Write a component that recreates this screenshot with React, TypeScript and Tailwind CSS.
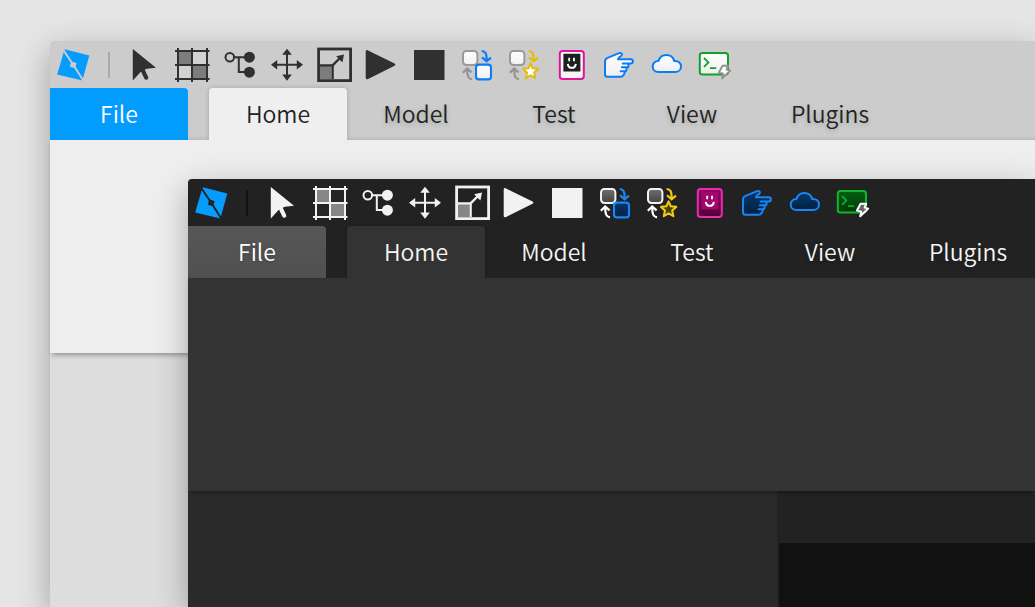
import type { ReactNode } from 'react';
import clsx from 'clsx';

interface Palette {
    id: string;
    bar: string;
    ink: string;
    cell: string;
    cellAlt: string;
    box: [string, string];
    boxStroke: string;
    back: string;
    blueFill: [string, string];
    blue: string;
    starFill: string;
    star: string;
    pinkFill: [string, string];
    pink: string;
    face: string;
    greenFill: [string, string];
    green: string;
    prompt: string;
    boltFill: string;
    bolt: string;
}

const light: Palette = {
    id: 'light',
    bar: '#cccccc',
    ink: '#303030',
    cell: '#7d7d7d',
    cellAlt: '#d2d2d2',
    box: ['#ffffff', '#f0f0f0'],
    boxStroke: '#999999',
    back: '#949494',
    blueFill: ['#ffffff', '#eeeeee'],
    blue: '#0a7cf5',
    starFill: '#ffffff',
    star: '#e2bd10',
    pinkFill: ['#ffffff', '#f2f2f2'],
    pink: '#e0149c',
    face: '#1f1f1f',
    greenFill: ['#ffffff', '#eeeeee'],
    green: '#0da32a',
    prompt: '#0da32a',
    boltFill: '#ffffff',
    bolt: '#919191',
};

const dark: Palette = {
    id: 'dark',
    bar: '#222222',
    ink: '#f2f2f2',
    cell: '#868686',
    cellAlt: '#252525',
    box: ['#707070', '#444444'],
    boxStroke: '#f2f2f2',
    back: '#ffffff',
    blueFill: ['#06376b', '#03203f'],
    blue: '#1687f5',
    starFill: '#4f4300',
    star: '#f0c818',
    pinkFill: ['#8f0563', '#4d0035'],
    pink: '#ee2aac',
    face: '#a3076f',
    greenFill: ['#035f10', '#023a09'],
    green: '#12b52f',
    prompt: '#16a52e',
    boltFill: '#666666',
    bolt: '#ffffff',
};

function Icon({ children }: { children: ReactNode }) {
    return (
        <svg viewBox="0 0 36 37" className="block w-9 h-[37px] overflow-visible" fill="none" aria-hidden="true">
            {children}
        </svg>
    );
}

function Gradient({ id, stops }: { id: string; stops: [string, string] }) {
    return (
        <linearGradient id={id} x1="0" y1="0" x2="0" y2="1">
            <stop offset="0" stopColor={stops[0]} />
            <stop offset="1" stopColor={stops[1]} />
        </linearGradient>
    );
}

function Logo({ p }: { p: Palette }) {
    return (
        <Icon>
            <path d="M8.6 3.2 33.3 9.6 26.4 34.4 1.2 28.4Z" fill="#069bff" />
            <path d="M6.4 2.6 17.4 19 28.2 36" stroke={p.bar} strokeWidth="1.9" />
            <path d="M15.2 15.5 20.6 17 19.2 22.2 13.9 20.8Z" fill={p.bar} />
        </Icon>
    );
}

function SelectIcon({ p }: { p: Palette }) {
    return (
        <Icon>
            <path d="M6.8 3 30 21.8 20.8 22.8 14.8 25.8 6.8 34.6Z" fill={p.ink} />
            <path d="M15.8 22.4 20.2 31.6" stroke={p.ink} strokeWidth="4.2" strokeLinecap="round" />
        </Icon>
    );
}

function GridIcon({ p }: { p: Palette }) {
    return (
        <Icon>
            <path d="M5 5H34V33H5Z" fill={p.cellAlt} />
            <path d="M5 5H19V19H5ZM19 19H34V33H19Z" fill={p.cell} />
            <path d="M2 5H36.5M2 19H36.5M2 33H36.5M5 2V36M19 2V36M34 2V36" stroke={p.ink} strokeWidth="2" />
        </Icon>
    );
}

function TreeIcon({ p }: { p: Palette }) {
    return (
        <Icon>
            <circle cx="8.8" cy="11.2" r="4.3" stroke={p.ink} strokeWidth="2" />
            <path d="M13.4 11.2H28M17.8 11.2V26H28" stroke={p.ink} strokeWidth="2" />
            <circle cx="28.4" cy="11.2" r="5.5" fill={p.ink} />
            <circle cx="28.4" cy="26.2" r="5.5" fill={p.ink} />
        </Icon>
    );
}

function MoveIcon({ p }: { p: Palette }) {
    return (
        <Icon>
            <path d="M19 5V32M5 18.7H33" stroke={p.ink} strokeWidth="2" />
            <path
                d="M19 2.7 23.8 8.8H14.2ZM19 34.7 23.8 28.6H14.2ZM3 18.7 9.2 13.9V23.5ZM35 18.7 28.8 13.9V23.5Z"
                fill={p.ink}
            />
        </Icon>
    );
}

function ScaleIcon({ p }: { p: Palette }) {
    return (
        <Icon>
            <path d="M4 20H15V33H4Z" fill={p.cell} />
            <rect x="2.6" y="3" width="32" height="31.6" stroke={p.ink} strokeWidth="2.8" />
            <path d="M4 19.4H16.6V33" stroke={p.ink} strokeWidth="2.4" />
            <path d="M16.6 19.4 24.5 11.5" stroke={p.ink} strokeWidth="2.4" />
            <path d="M28 8.6 26.4 16.4 20.2 10.2Z" fill={p.ink} />
        </Icon>
    );
}

function PlayIcon({ p }: { p: Palette }) {
    return (
        <Icon>
            <path d="M4 5.4 31 18.7 4 32Z" fill={p.ink} stroke={p.ink} strokeWidth="2.6" strokeLinejoin="round" />
        </Icon>
    );
}

function StopIcon({ p }: { p: Palette }) {
    return (
        <Icon>
            <path d="M3 4H33.5V34H3Z" fill={p.ink} />
        </Icon>
    );
}

// shared by the two "replace" tools: source box plus the pair of swap arrows
function SwapParts({ p, accent, name }: { p: Palette; accent: string; name: string }) {
    return (
        <>
            <defs>
                <Gradient id={`${p.id}-${name}-box`} stops={p.box} />
            </defs>
            <rect x="4" y="5" width="14.4" height="14" rx="3.4" fill={`url(#${p.id}-${name}-box)`} stroke={p.boxStroke} strokeWidth="2" />
            <path d="M22.6 5C26.4 5 27.8 7.4 27.6 14.6M23 11.2 27.6 15.4 32 11.6" stroke={accent} strokeWidth="2.2" />
            <path d="M13 33.4C9.2 32.6 8.2 30 8.2 23.6M3.8 26.8 8.2 22.6 12.6 26.4" stroke={p.back} strokeWidth="2.2" />
        </>
    );
}

function SwapIcon({ p }: { p: Palette }) {
    return (
        <Icon>
            <SwapParts p={p} accent={p.blue} name="swap" />
            <defs>
                <Gradient id={`${p.id}-swap-target`} stops={p.blueFill} />
            </defs>
            <rect x="17" y="18.6" width="15" height="14.8" rx="3" fill={`url(#${p.id}-swap-target)`} stroke={p.blue} strokeWidth="2.1" />
        </Icon>
    );
}

function SwapStarIcon({ p }: { p: Palette }) {
    return (
        <Icon>
            <SwapParts p={p} accent={p.star} name="star" />
            <path
                d="M24.6 17.4 26.8 22.3 32.2 22.9 28.2 26.6 29.4 32.2 24.6 29.4 19.8 32.2 21 26.6 17 22.9 22.4 22.3Z"
                fill={p.starFill}
                stroke={p.star}
                strokeWidth="2.1"
                strokeLinejoin="round"
            />
        </Icon>
    );
}

function FaceIcon({ p }: { p: Palette }) {
    return (
        <Icon>
            <defs>
                <Gradient id={`${p.id}-face`} stops={p.pinkFill} />
            </defs>
            <rect x="5.8" y="5" width="24" height="28" rx="2.8" fill={`url(#${p.id}-face)`} stroke={p.pink} strokeWidth="2" />
            <path d="M9.4 7.8H26.4V25.4H9.4Z" fill={p.face} />
            <path d="M15.2 11.8V15.2M20 11.8V15.2" stroke="#fff" strokeWidth="1.8" />
            <path d="M13.8 17.8C14.4 23.2 21.2 23.2 21.8 17.8" stroke="#fff" strokeWidth="2" />
        </Icon>
    );
}

function HandIcon({ p }: { p: Palette }) {
    return (
        <Icon>
            <defs>
                <Gradient id={`${p.id}-hand`} stops={p.blueFill} />
            </defs>
            <path
                d="M6 12.2 17.4 7.4C19.4 6.6 21 7 21 8.6 21 9.8 19.8 10.4 18.6 11L17 13.2H29.8C32.6 13.2 32.6 17.5 29.8 17.5H21.8 26.2C28 17.5 28 21.3 26.2 21.3H20.8 24.2C26 21.3 26 25.2 24.2 25.2H19.6 22.2C23.8 25.2 24 26.6 23.2 28L22.6 29Q21.6 30.8 19.6 30.8H6.6Q4 30.8 4 28.2V15.2Q4 13 6 12.2Z"
                fill={`url(#${p.id}-hand)`}
                stroke={p.blue}
                strokeWidth="2"
                strokeLinejoin="round"
                strokeLinecap="round"
            />
        </Icon>
    );
}

function CloudIcon({ p }: { p: Palette }) {
    return (
        <Icon>
            <defs>
                <Gradient id={`${p.id}-cloud`} stops={p.blueFill} />
            </defs>
            <path
                d="M9.6 26C5.8 26 3.7 23.4 3.7 20.4 3.7 17 6.2 14.9 9.5 15.1 10.6 11.2 13.6 9.1 17.4 9.1 21.4 9.1 24.2 11.4 25.2 15 29.4 14.6 32 17.2 32 20.4 32 23.6 29.6 26 26.2 26Z"
                fill={`url(#${p.id}-cloud)`}
                stroke={p.blue}
                strokeWidth="2"
                strokeLinejoin="round"
            />
        </Icon>
    );
}

function ConsoleIcon({ p }: { p: Palette }) {
    return (
        <Icon>
            <defs>
                <Gradient id={`${p.id}-console`} stops={p.greenFill} />
            </defs>
            <rect x="3.8" y="7" width="28.2" height="21.6" rx="2.6" fill={`url(#${p.id}-console)`} stroke={p.green} strokeWidth="2" />
            <path d="M8 12 12.4 16.4 8 20.8M14 22.2H20.2" stroke={p.prompt} strokeWidth="1.8" />
            <path
                d="M26.6 19.8H32.2L30.6 23.6 34.2 24.6 26.2 32.2 27.2 27.6 22.9 26.6Z"
                fill={p.boltFill}
                stroke={p.bolt}
                strokeWidth="2"
                strokeLinejoin="round"
            />
        </Icon>
    );
}

const tools = [
    { label: 'Select', Glyph: SelectIcon },
    { label: 'Snap to grid', Glyph: GridIcon },
    { label: 'Hierarchy', Glyph: TreeIcon },
    { label: 'Move', Glyph: MoveIcon },
    { label: 'Scale', Glyph: ScaleIcon },
    { label: 'Play', Glyph: PlayIcon },
    { label: 'Stop', Glyph: StopIcon },
    { label: 'Replace', Glyph: SwapIcon },
    { label: 'Replace with favorite', Glyph: SwapStarIcon },
    { label: 'Character', Glyph: FaceIcon },
    { label: 'Pointer', Glyph: HandIcon },
    { label: 'Cloud', Glyph: CloudIcon },
    { label: 'Run script', Glyph: ConsoleIcon },
];

const tabs = ['Home', 'Model', 'Test', 'View', 'Plugins'];

function Toolbar({ p }: { p: Palette }) {
    return (
        <div className="flex items-center h-[47px] pl-1.5">
            <Logo p={p} />
            <div className={clsx('w-0.5 h-[26px] ml-4 mr-2.5', p.id === 'dark' ? 'bg-[#111111]' : 'bg-[#aaaaaa]')} />
            <div className="grid grid-cols-13 w-[618px] shrink-0">
                {tools.map(({ label, Glyph }) => (
                    <button key={label} type="button" aria-label={label} className="flex justify-center cursor-pointer">
                        <Glyph p={p} />
                    </button>
                ))}
            </div>
        </div>
    );
}

function TabBar({ isDark }: { isDark: boolean }) {
    return (
        <nav
            className={clsx(
                'flex h-[52px] text-[23px] leading-[50px] font-[350]',
                !isDark && 'shadow-[inset_0_-5px_4px_-4px_rgb(0_0_0/0.12)]'
            )}
        >
            <button
                type="button"
                className={clsx(
                    'w-[138px] mr-[21px] pb-0.5 shrink-0 rounded-tr cursor-pointer text-white',
                    isDark ? 'bg-linear-to-b from-[#575757] to-[#505050] text-shadow-[0_2px_4px_rgb(0_0_0/0.2)]' : 'bg-[#029cff]'
                )}
            >
                File
            </button>
            {tabs.map((tab) => (
                <button
                    key={tab}
                    type="button"
                    className={clsx(
                        'w-[138px] pb-0.5 shrink-0 rounded-t cursor-pointer',
                        isDark ? 'text-[#f5f5f5]' : 'text-[#222222]',
                        tab === 'Home' && (isDark ? 'bg-[#333333] shadow-[0_0_5px_rgb(0_0_0/0.3)]' : 'bg-[#efefef] shadow-[0_0_5px_rgb(0_0_0/0.2)]'),
                        tab !== 'Home' && 'text-shadow-[0_2px_5px_rgb(0_0_0/0.2)]'
                    )}
                >
                    {tab}
                </button>
            ))}
        </nav>
    );
}

function StudioWindow({ p, className, children }: { p: Palette; className: string; children?: ReactNode }) {
    const isDark = p.id === 'dark';

    return (
        <section
            className={clsx(
                'absolute right-0 bottom-0 flex flex-col rounded-tl shadow-[0_10px_32px_rgb(0_0_0/0.3)]',
                isDark ? 'bg-[#222222]' : 'bg-[#cccccc]',
                className
            )}
        >
            <div className="overflow-hidden rounded-tl shrink-0">
                <Toolbar p={p} />
                <TabBar isDark={isDark} />
            </div>
            <div
                className={clsx(
                    'relative h-[213px] shrink-0',
                    isDark ? 'bg-[#333333] shadow-[0_4px_4px_-2px_rgb(0_0_0/0.3)]' : 'bg-[#eeeeee] shadow-[0_4px_5px_-2px_rgb(0_0_0/0.35)]'
                )}
            />
            {children}
        </section>
    );
}

export default function App() {
    return (
        <main className="relative h-screen overflow-hidden bg-[#e5e5e5] font-['Noto_Sans_CJK_SC','Noto_Sans',sans-serif]">
            <StudioWindow p={light} className="left-[50px] top-[41px]">
                <div className="flex-1 bg-[#dddddd]" />
            </StudioWindow>
            <StudioWindow p={dark} className="left-[188px] top-[179px]">
                <div className="flex flex-1">
                    <div className="w-[589px] bg-[#2a2a2a]" />
                    <div className="flex-1 flex flex-col pl-0.5 bg-[#222222]">
                        <div className="h-[52px]" />
                        <div className="flex-1 bg-[#111111]" />
                    </div>
                </div>
            </StudioWindow>
        </main>
    );
}
